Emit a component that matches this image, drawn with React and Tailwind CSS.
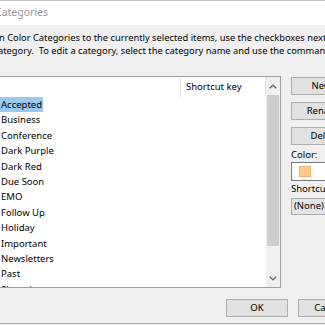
import React from 'react';

const categories = [
  'Accepted',
  'Business',
  'Conference',
  'Dark Purple',
  'Dark Red',
  'Due Soon',
  'EMO',
  'Follow Up',
  'Holiday',
  'Important',
  'Newsletters',
  'Past',
  'Shopping',
];

function Chevron({ down }) {
  return (
    <svg width="8" height="5" viewBox="0 0 8 5" className={down ? 'rotate-180' : ''}>
      <path d="M0.8 4.3 L4 1.1 L7.2 4.3" fill="none" stroke="#606060" strokeWidth="1.3" />
    </svg>
  );
}

export default function App() {
  return (
    <div className="w-[325px] h-[325px] overflow-hidden bg-[#f0f0f0] flex flex-col font-['Noto_Sans',sans-serif] text-[9.5px] text-black">
      {/* Title bar */}
      <div className="h-[25px] shrink-0 bg-white border-t border-[#c4c4c4] flex items-center">
        <span className="-ml-[5px] text-[10.5px] text-[#9a9a9a] whitespace-nowrap">Categories</span>
      </div>

      {/* Description */}
      <div className="pt-[6px] leading-[13px] whitespace-nowrap text-[9.3px]">
        <div className="-ml-[1px]">n Color Categories to the currently selected items, use the checkboxes next to each</div>
        <div className="-ml-[2px]">ategory.&nbsp; To edit a category, select the category name and use the commands to the right.</div>
      </div>

      {/* Main area */}
      <div className="mt-[19px] h-[212px] shrink-0 flex">
        {/* List box */}
        <div className="-ml-[20px] w-[301px] shrink-0 h-full bg-white border border-[#a0a0a0] flex overflow-hidden">
          <div className="flex-1 flex flex-col overflow-hidden">
            <div className="h-[20px] shrink-0 flex">
              <div className="w-[200px] border-r border-[#e5e5e5]" />
              <div className="flex-1 pl-[5px] flex items-center border-r border-[#e5e5e5]">Shortcut key</div>
            </div>
            <div className="flex flex-col">
              {categories.map((name, i) => (
                <div key={name} className="h-[15.4px] shrink-0 flex items-center pl-[19px]">
                  <span className={i === 0 ? 'bg-[#99c9ef] px-[1px] leading-[15.4px]' : 'px-[1px] leading-[15.4px]'}>{name}</span>
                </div>
              ))}
            </div>
          </div>
          {/* Scrollbar */}
          <div className="w-[14px] shrink-0 bg-[#f0f0f0] flex flex-col">
            <div className="h-[18px] flex items-center justify-center">
              <Chevron />
            </div>
            <div className="h-[151px] mx-[1px] bg-[#cdcdcd]" />
            <div className="flex-1" />
            <div className="h-[18px] flex items-center justify-center">
              <Chevron down />
            </div>
          </div>
        </div>

        {/* Right column */}
        <div className="ml-[10px] w-[68px] shrink-0 flex flex-col">
          <button className="mt-[1px] h-[18px] w-[68px] bg-[#e1e1e1] border border-[#adadad] whitespace-nowrap">New...</button>
          <button className="mt-[7px] h-[18px] w-[68px] bg-[#e1e1e1] border border-[#adadad] whitespace-nowrap">Rename</button>
          <button className="mt-[7px] h-[18px] w-[68px] bg-[#e1e1e1] border border-[#adadad] whitespace-nowrap">Delete</button>
          <div className="mt-[4px] leading-[12px]">Color:</div>
          <div className="mt-[1px] h-[19px] w-[68px] bg-white border border-[#7a7a7a] flex items-center pl-[7px]">
            <div className="w-[12px] h-[11px] bg-[#ffc98f] border border-[#f3b36c]" />
          </div>
          <div className="mt-[2px] leading-[12px] whitespace-nowrap">Shortcut key:</div>
          <div className="mt-[3px] h-[17px] w-[68px] bg-[#e5e5e5] border border-[#acacac] flex items-center pl-[2px]">(None)</div>
        </div>
      </div>

      {/* Bottom buttons */}
      <div className="mt-[11px] h-[18px] shrink-0 flex">
        <button className="ml-[226px] w-[62px] h-[18px] shrink-0 bg-[#e1e1e1] border border-[#adadad]">OK</button>
        <button className="ml-[10px] w-[62px] h-[18px] shrink-0 bg-[#e1e1e1] border border-[#adadad] whitespace-nowrap">Cancel</button>
      </div>

      <div className="mt-[6px] flex-1 border-t border-[#a8a8a8]" />
    </div>
  );
}
